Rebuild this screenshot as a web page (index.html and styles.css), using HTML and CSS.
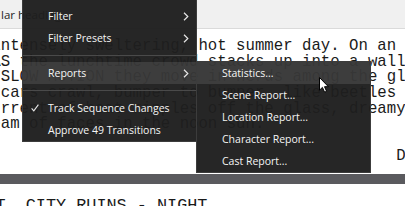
FILE: index.html
```html
<!DOCTYPE html>
<html lang="en">
<head>
<meta charset="utf-8">
<title>Script editor – Reports menu</title>
<link rel="stylesheet" href="styles.css">
</head>
<body>
<div class="app">
  <div class="toolbar"><span class="style-field">lar heading</span></div>
  <div class="doc">
    <div class="page">
      <div class="line">An intensely sweltering, hot summer day. On an ordinary</div>
      <div class="line">TEXAS the lunchtime crowd stacks up into a wall of</div>
      <div class="line">and SLOW MOTION they move in herds among the glass towers.</div>
      <div class="line">The cars crawl, bumper to bumper, like beetles in the heat.</div>
      <div class="line">A current of heat ripples off the glass, dreamy and slow, a</div>
      <div class="line">stream of faces in the noon sun.</div>
      <div class="line"></div>
      <div class="line transition">DISSOLVE TO:</div>
    </div>
  </div>
  <div class="pagebreak"></div>
  <div class="page2">
    <div class="heading">EXT. CITY RUINS - NIGHT</div>
  </div>

  <div class="menu main-menu">
    <div class="item"><span class="slot"></span><span class="label">Filter</span><svg class="chev" width="6" height="9" viewBox="0 0 6 9"><polyline points="1,0.8 4.8,4.5 1,8.2"/></svg></div>
    <div class="item"><span class="slot"></span><span class="label">Filter Presets</span><svg class="chev" width="6" height="9" viewBox="0 0 6 9"><polyline points="1,0.8 4.8,4.5 1,8.2"/></svg></div>
    <div class="sep"></div>
    <div class="item active"><span class="slot"></span><span class="label">Reports</span><svg class="chev" width="6" height="9" viewBox="0 0 6 9"><polyline points="1,0.8 4.8,4.5 1,8.2"/></svg></div>
    <div class="sep"></div>
    <div class="item"><span class="slot"><svg class="check" width="8" height="8" viewBox="0 0 8 8"><polyline points="0.6,4.4 2.8,6.9 7.4,0.6"/></svg></span><span class="label">Track Sequence Changes</span></div>
    <div class="item"><span class="slot"></span><span class="label">Approve 49 Transitions</span></div>
  </div>

  <div class="menu submenu">
    <div class="item active"><span class="slot"></span><span class="label">Statistics...</span></div>
    <div class="item"><span class="slot"></span><span class="label">Scene Report...</span></div>
    <div class="item"><span class="slot"></span><span class="label">Location Report...</span></div>
    <div class="item"><span class="slot"></span><span class="label">Character Report...</span></div>
    <div class="item"><span class="slot"></span><span class="label">Cast Report...</span></div>
  </div>

  <svg class="cursor" width="12" height="17" viewBox="0 0 12 17"><path d="M0.5,0.5 L0.5,13.2 L3.4,10.4 L5.6,15.2 L7.6,14.3 L5.5,9.7 L9.4,9.7 Z"/></svg>
</div>
</body>
</html>
```
FILE: styles.css
```css
html, body {
  margin: 0;
  padding: 0;
}
body {
  width: 405px;
  height: 206px;
  overflow: hidden;
  background: #ffffff;
}
.app {
  position: relative;
  width: 405px;
  height: 206px;
  overflow: hidden;
  display: flex;
  flex-direction: column;
}
.toolbar {
  flex: none;
  height: 28px;
  background: #f0f0f0;
  border-bottom: 1px solid #dadada;
  display: flex;
  align-items: center;
  padding-left: 1px;
  font-family: "Open Sans", "Noto Sans", sans-serif;
  font-size: 11.5px;
  color: #1e1e1e;
  white-space: nowrap;
}
.doc {
  flex: none;
  height: 145px;
  box-sizing: border-box;
  padding-top: 10px;
  overflow: hidden;
  background: #ffffff;
}
.page {
  margin-left: -36.9px;
  font-family: "Liberation Mono", monospace;
  font-size: 15.7px;
  line-height: 15.7px;
  color: #1a1a1a;
}
.line {
  height: 15.7px;
  white-space: pre;
}
.transition {
  padding-left: 46ch;
}
.pagebreak {
  flex: none;
  height: 10px;
  background: #5a5a5e;
}
.page2 {
  flex: 1;
  background: #ffffff;
  padding-top: 14px;
  overflow: hidden;
}
.heading {
  margin-left: -24.8px;
  font-family: "Liberation Mono", monospace;
  font-size: 16.83px;
  line-height: 16.83px;
  color: #1a1a1a;
  white-space: pre;
}

/* menus */
.menu {
  position: absolute;
  box-sizing: border-box;
  background: rgba(30, 30, 30, 0.965);
  border: 1px solid #3c3c3c;
  font-family: "Open Sans", "Noto Sans", sans-serif;
  font-size: 10.5px;
  color: #f5f5f5;
  display: flex;
  flex-direction: column;
}
.main-menu {
  left: 22px;
  top: -1px;
  width: 175px;
  padding-top: 5px;
}
.submenu {
  left: 196px;
  top: 61px;
  width: 175px;
}
.item {
  height: 22px;
  display: flex;
  align-items: center;
  white-space: nowrap;
}
.item.active {
  background: rgba(255, 255, 255, 0.11);
}
.slot {
  width: 25px;
  flex: none;
  display: flex;
  align-items: center;
  padding-left: 8px;
  box-sizing: border-box;
}
.label {
  flex: 1;
}
.chev {
  flex: none;
  margin-right: 7px;
  fill: none;
  stroke: #e6e6e6;
  stroke-width: 1.2;
}
.check {
  fill: none;
  stroke: #e6e6e6;
  stroke-width: 1.1;
}
.sep {
  height: 1px;
  margin: 6px 0;
  background: #4a4a4a;
}
.cursor {
  position: absolute;
  left: 319px;
  top: 77px;
  fill: #ffffff;
  stroke: #000000;
  stroke-width: 1;
  stroke-linejoin: miter;
}
```
